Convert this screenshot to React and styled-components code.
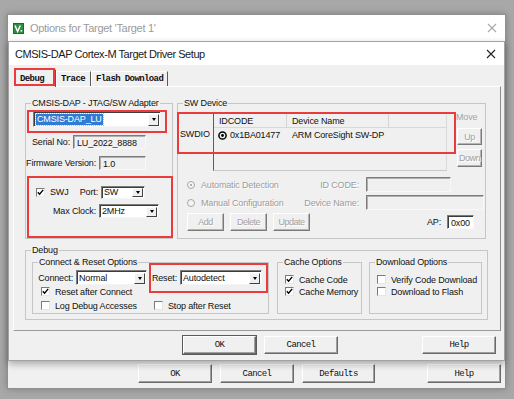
import React from 'react';
import styled, { createGlobalStyle } from 'styled-components';

const GlobalStyle = createGlobalStyle`
  html, body { margin: 0; padding: 0; background: #a8a8a8; }
  body { font-family: "Liberation Sans", Arial, sans-serif; }
  * { box-sizing: border-box; }
`;

const UI_FONT = `font-family: "Liberation Sans", Arial, sans-serif; font-size: 9px; letter-spacing: -0.15px; color: #101010;`;
const MONO_FONT = `font-family: "Liberation Mono", "Courier New", monospace; font-size: 9px; letter-spacing: -0.6px; color: #111;`;

const Desktop = styled.div`
  position: relative;
  width: 514px;
  height: 399px;
  background: #a8a8a8;
  padding: 14px 0 0 7px;
  overflow: hidden;
`;

const OuterWindow = styled.div`
  width: 499px;
  height: 375px;
  border: 1px solid #8f8f8f;
  background: #f0f0f0;
  display: flex;
  flex-direction: column;
  box-shadow: 0 0 7px rgba(0, 0, 0, 0.25);
`;

const TitleBar = styled.div`
  flex: none;
  height: ${p => p.$h}px;
  background: #fff;
  display: flex;
  align-items: center;
  padding: 0 8px 0 ${p => p.$pad}px;
  gap: 6px;
`;

const TitleText = styled.span`
  flex: 1;
  font-family: "Liberation Sans", Arial, sans-serif;
  font-size: 11px;
  letter-spacing: ${p => (p.$inactive ? '-0.3px' : '-0.45px')};
  color: ${p => (p.$inactive ? '#9b9b9b' : '#1a1a1a')};
  white-space: nowrap;
`;

const CloseIcon = ({ color }) => (
  <svg width="10" height="10" viewBox="0 0 10 10">
    <path d="M1 1 L9 9 M9 1 L1 9" stroke={color} strokeWidth="1.1" fill="none" />
  </svg>
);

const AppIcon = () => (
  <svg width="11" height="11" viewBox="0 0 11 11">
    <rect x="0" y="0" width="11" height="11" fill="#2f8f3f" />
    <rect x="0.5" y="0.5" width="10" height="10" fill="none" stroke="#1d6b2a" />
    <path d="M2 2.5 L4.6 8.5 L7.3 2.5" stroke="#fff" strokeWidth="1.5" fill="none" />
    <rect x="7.6" y="7" width="1.6" height="1.6" fill="#fff" />
  </svg>
);

const InnerDialog = styled.div`
  flex: none;
  height: 320px;
  background: #f0f0f0;
  border: 1px solid #a3a3a3;
  display: flex;
  flex-direction: column;
  box-shadow: 0 3px 7px rgba(0, 0, 0, 0.3);
  position: relative;
  z-index: 1;
`;

const InnerBody = styled.div`
  flex: 1;
  display: flex;
  flex-direction: column;
  padding: 3px 4px 0 4px;
`;

const TabStrip = styled.div`
  display: flex;
  align-items: flex-end;
  height: 18px;
  padding-left: 1px;
`;

const Tab = styled.div`
  ${MONO_FONT};
  font-weight: bold;
  width: ${p => p.$w}px;
  height: ${p => (p.$active ? 18 : 15)}px;
  display: flex;
  align-items: center;
  padding-left: ${p => (p.$active ? 5 : 4)}px;
  border-left: 1px solid #fff;
  border-top: 1px solid #fff;
  border-right: 1px solid #5a5a5a;
  background: #f0f0f0;
  margin-bottom: ${p => (p.$active ? -1 : 0)}px;
  position: relative;
  z-index: ${p => (p.$active ? 1 : 0)};
`;

const TabPanel = styled.div`
  width: 488px;
  height: 245px;
  border: 1px solid;
  border-color: #fff #8a8a8a #9a9a9a #fff;
  padding: 11px 0 0 11px;
  display: flex;
  flex-direction: column;
`;

const TopRow = styled.div`
  display: flex;
  gap: 4px;
`;

const Group = styled.fieldset`
  margin: ${p => p.$mt || 0}px 0 0 ${p => p.$ml || 0}px;
  padding: 0;
  min-width: 0;
  width: ${p => p.$w}px;
  height: ${p => p.$h}px;
  border: 1px solid #c6c6c6;
  display: flex;
  flex-direction: column;
  flex: none;
`;

const Legend = styled.legend`
  ${UI_FONT};
  line-height: 11px;
  padding: 0 1px;
  margin-left: 5px;
`;

const Row = styled.div`
  display: flex;
  align-items: center;
  height: ${p => p.$h}px;
  margin-top: ${p => p.$mt || 0}px;
  margin-left: ${p => p.$ml || 0}px;
  flex: none;
`;

const Label = styled.span`
  ${UI_FONT};
  width: ${p => (p.$w ? `${p.$w}px` : 'auto')};
  text-align: ${p => (p.$right ? 'right' : 'left')};
  padding-right: ${p => (p.$right ? 3 : 0)}px;
  margin-left: ${p => p.$ml || 0}px;
  white-space: nowrap;
  flex: none;
  ${p => p.$disabled && 'color: #9c9c9c; text-shadow: 1px 1px 0 #fff;'}
`;

const Combo = styled.div`
  ${UI_FONT};
  width: ${p => p.$w}px;
  height: ${p => p.$h}px;
  background: #fff;
  border: 1px solid;
  border-color: #7c7c7c #f4f4f4 #f4f4f4 #7c7c7c;
  box-shadow: inset 1px 1px 0 #3c3c3c;
  display: flex;
  align-items: center;
  padding: 1px 1px 0 2px;
  margin-left: ${p => p.$ml || 0}px;
  flex: none;
`;

const ComboValue = styled.span`
  flex: 1;
  white-space: nowrap;
  overflow: hidden;
  line-height: 11px;
  ${p =>
    p.$selected &&
    `color: #fff; background: #2f7bd6; flex: none; padding: 0 1px; outline: 1px dotted #9cc3f0;`}
`;

const ComboButton = styled.span`
  width: 11px;
  height: calc(100% - 1px);
  margin-left: auto;
  background: #f0f0f0;
  border: 1px solid;
  border-color: #fff #404040 #404040 #fff;
  display: flex;
  align-items: center;
  justify-content: center;
  flex: none;
  &::after {
    content: '';
    border-left: 2.5px solid transparent;
    border-right: 2.5px solid transparent;
    border-top: 3px solid #000;
  }
`;

const TextBox = styled.div`
  ${UI_FONT};
  width: ${p => p.$w}px;
  height: ${p => p.$h}px;
  background: ${p => (p.$white ? '#fff' : '#f0f0f0')};
  border: 1px solid;
  border-color: #7c7c7c #f8f8f8 #f8f8f8 #7c7c7c;
  box-shadow: inset 1px 1px 0 ${p => (p.$white ? '#3c3c3c' : '#b0b0b0')};
  display: flex;
  align-items: center;
  padding: 1px 0 0 3px;
  margin-left: ${p => p.$ml || 0}px;
  white-space: nowrap;
  flex: none;
`;

const CheckBox = styled.span`
  width: 9px;
  height: 9px;
  background: #fff;
  border: 1px solid;
  border-color: #7a7a7a #e6e6e6 #e6e6e6 #7a7a7a;
  margin-left: ${p => p.$ml || 0}px;
  margin-right: 5px;
  flex: none;
  display: flex;
  align-items: center;
  justify-content: center;
`;

const Check = ({ on, ml }) => (
  <CheckBox $ml={ml}>
    {on && (
      <svg width="7" height="7" viewBox="0 0 7 7">
        <path d="M0.8 3.2 L2.6 5.2 L6.2 0.9" stroke="#000" strokeWidth="1.4" fill="none" />
      </svg>
    )}
  </CheckBox>
);

const RadioMark = styled.span`
  width: 8px;
  height: 8px;
  border-radius: 50%;
  background: #f4f4f4;
  border: 1px solid #a8a8a8;
  margin-left: ${p => p.$ml || 0}px;
  margin-right: 6px;
  flex: none;
  display: flex;
  align-items: center;
  justify-content: center;
  &::after {
    content: '';
    width: 2px;
    height: 2px;
    border-radius: 50%;
    background: ${p => (p.$on ? '#9a9a9a' : 'transparent')};
  }
`;

const Btn = styled.div`
  ${MONO_FONT};
  width: ${p => p.$w}px;
  height: ${p => p.$h}px;
  margin-left: ${p => p.$ml || 0}px;
  background: #f0f0f0;
  border: 1px solid;
  border-color: #fff #6a6a6a #6a6a6a #fff;
  box-shadow: inset -1px -1px 0 #a0a0a0${p => (p.$default ? ', 0 0 0 1px #5a5a5a' : '')};
  display: flex;
  align-items: center;
  justify-content: center;
  flex: none;
`;

const SmallBtn = styled.div`
  ${UI_FONT};
  color: #a2a2a2;
  text-shadow: 1px 1px 0 #fff;
  width: ${p => p.$w}px;
  height: ${p => p.$h}px;
  margin-left: ${p => p.$ml || 0}px;
  margin-top: ${p => p.$mt || 0}px;
  background: #f0f0f0;
  border: 1px solid;
  border-color: #fff #7a7a7a #7a7a7a #fff;
  box-shadow: inset -1px -1px 0 #b4b4b4;
  display: flex;
  align-items: center;
  justify-content: center;
  letter-spacing: -0.5px;
  white-space: nowrap;
  flex: none;
`;

const ButtonBar = styled.div`
  display: flex;
  align-items: center;
  gap: 8px;
  margin-top: ${p => p.$mt}px;
  padding: 0 ${p => p.$pr}px 0 ${p => p.$pl}px;
  & > :last-child { margin-left: auto; }
`;

/* SW device list */
const DeviceTop = styled.div`
  display: flex;
  margin-top: 4px;
  height: 58px;
`;

const PortLabel = styled.div`
  ${UI_FONT};
  width: 35px;
  padding: 16px 0 0 2px;
`;

const ListView = styled.div`
  width: 234px;
  height: 58px;
  border-left: 1px solid #5e5e5e;
  border-top: 1px solid #d6d6d6;
  border-bottom: 1px solid #c8c8c8;
  border-right: 1px solid #dadada;
  display: flex;
  flex-direction: column;
`;

const ListRow = styled.div`
  display: grid;
  grid-template-columns: 73px 102px 1fr;
  height: 14px;
  ${p => p.$header && 'border-bottom: 1px solid #d8d8d8;'}
`;

const ListCell = styled.div`
  ${UI_FONT};
  display: flex;
  align-items: center;
  gap: 3px;
  padding-left: ${p => p.$pl || 5}px;
  white-space: nowrap;
  ${p => p.$sep && 'border-right: 1px solid #d4d4d4;'}
`;

const MoveColumn = styled.div`
  width: 25px;
  margin-left: 10px;
  display: flex;
  flex-direction: column;
`;

const MoveLabel = styled.span`
  ${UI_FONT};
  color: #a6a6a6;
  line-height: 9px;
  margin-left: -1px;
`;

const ConfigGrid = styled.div`
  display: grid;
  grid-template-columns: 122px 58px 1fr;
  grid-auto-rows: 15px;
  row-gap: 3px;
  column-gap: 4px;
  margin-top: 6px;
  align-items: center;
`;

const RadioCell = styled.div`
  display: flex;
  align-items: center;
`;

const DebugRow = styled.div`
  display: flex;
  margin-left: 6px;
`;

const Highlight = styled.div`
  position: absolute;
  left: ${p => p.$x}px;
  top: ${p => p.$y}px;
  width: ${p => p.$w}px;
  height: ${p => p.$h}px;
  border: 2px solid #ea3b3f;
  pointer-events: none;
  z-index: 5;
`;

const DeviceIcon = () => (
  <svg width="9" height="9" viewBox="0 0 9 9">
    <circle cx="4.5" cy="4.5" r="3.6" fill="none" stroke="#000" strokeWidth="1.5" />
    <circle cx="4.5" cy="4.5" r="1.4" fill="#000" />
  </svg>
);

export default function App() {
  return (
    <>
      <GlobalStyle />
      <Desktop>
        <OuterWindow>
          <TitleBar $h={26} $pad={5}>
            <AppIcon />
            <TitleText $inactive>Options for Target 'Target 1'</TitleText>
            <CloseIcon color="#a9a9a9" />
          </TitleBar>

          <InnerDialog>
            <TitleBar $h={23} $pad={6}>
              <TitleText>CMSIS-DAP Cortex-M Target Driver Setup</TitleText>
              <CloseIcon color="#222" />
            </TitleBar>

            <InnerBody>
              <TabStrip>
                <Tab $w={42} $active>Debug</Tab>
                <Tab $w={35}>Trace</Tab>
                <Tab $w={77}>Flash Download</Tab>
              </TabStrip>

              <TabPanel>
                <TopRow>
                  <Group $w={148} $h={141}>
                    <Legend>CMSIS-DAP - JTAG/SW Adapter</Legend>
                    <Row $h={16} $mt={2} $ml={7}>
                      <Combo $w={128} $h={16}>
                        <ComboValue $selected>CMSIS-DAP_LU</ComboValue>
                        <ComboButton />
                      </Combo>
                    </Row>
                    <Row $h={14} $mt={8}>
                      <Label $w={47} $right>Serial No:</Label>
                      <TextBox $w={73} $h={14}>LU_2022_8888</TextBox>
                    </Row>
                    <Row $h={14} $mt={7}>
                      <Label $w={73} $right>Firmware Version:</Label>
                      <TextBox $w={47} $h={14}>1.0</TextBox>
                    </Row>
                    <Row $h={12} $mt={16} $ml={10}>
                      <Check on />
                      <Label $w={28}>SWJ</Label>
                      <Label $w={23} $right>Port:</Label>
                      <Combo $w={44} $h={13}>
                        <ComboValue>SW</ComboValue>
                        <ComboButton />
                      </Combo>
                    </Row>
                    <Row $h={14} $mt={6}>
                      <Label $w={73} $right>Max Clock:</Label>
                      <Combo $w={60} $h={14}>
                        <ComboValue>2MHz</ComboValue>
                        <ComboButton />
                      </Combo>
                    </Row>
                  </Group>

                  <Group $w={309} $h={141}>
                    <Legend>SW Device</Legend>
                    <DeviceTop>
                      <PortLabel>SWDIO</PortLabel>
                      <ListView>
                        <ListRow $header>
                          <ListCell $sep>IDCODE</ListCell>
                          <ListCell $sep>Device Name</ListCell>
                          <ListCell />
                        </ListRow>
                        <ListRow>
                          <ListCell $pl={4}>
                            <DeviceIcon />
                            0x1BA01477
                          </ListCell>
                          <ListCell>ARM CoreSight SW-DP</ListCell>
                          <ListCell />
                        </ListRow>
                      </ListView>
                      <MoveColumn>
                        <MoveLabel>Move</MoveLabel>
                        <SmallBtn $w={25} $h={17} $mt={6}>Up</SmallBtn>
                        <SmallBtn $w={25} $h={18} $mt={4}>Down</SmallBtn>
                      </MoveColumn>
                    </DeviceTop>

                    <ConfigGrid>
                      <RadioCell>
                        <RadioMark $ml={9} $on />
                        <Label $disabled>Automatic Detection</Label>
                      </RadioCell>
                      <Label $right $disabled>ID CODE:</Label>
                      <TextBox $w={85} $h={15} />
                      <RadioCell>
                        <RadioMark $ml={9} />
                        <Label $disabled>Manual Configuration</Label>
                      </RadioCell>
                      <Label $right $disabled>Device Name:</Label>
                      <TextBox $w={118} $h={15} />
                    </ConfigGrid>

                    <Row $h={18} $mt={3} $ml={9}>
                      <SmallBtn $w={37} $h={18}>Add</SmallBtn>
                      <SmallBtn $w={37} $h={18} $ml={6}>Delete</SmallBtn>
                      <SmallBtn $w={37} $h={18} $ml={6}>Update</SmallBtn>
                      <Label $w={134} $right>AP:</Label>
                      <TextBox $w={27} $h={14} $white $ml={3}>0x00</TextBox>
                    </Row>
                  </Group>
                </TopRow>

                <Group $w={463} $h={75} $mt={6}>
                  <Legend>Debug</Legend>
                  <DebugRow>
                    <Group $w={237} $h={57} $mt={1}>
                      <Legend>Connect &amp; Reset Options</Legend>
                      <Row $h={15} $mt={2}>
                        <Label $w={43} $right>Connect:</Label>
                        <Combo $w={71} $h={15}>
                          <ComboValue>Normal</ComboValue>
                          <ComboButton />
                        </Combo>
                        <Label $w={33} $right>Reset:</Label>
                        <Combo $w={82} $h={15}>
                          <ComboValue>Autodetect</ComboValue>
                          <ComboButton />
                        </Combo>
                      </Row>
                      <Row $h={11} $mt={1} $ml={8}>
                        <Check on />
                        <Label>Reset after Connect</Label>
                      </Row>
                      <Row $h={11} $mt={3} $ml={8}>
                        <Check />
                        <Label $w={99}>Log Debug Accesses</Label>
                        <Check />
                        <Label>Stop after Reset</Label>
                      </Row>
                    </Group>

                    <Group $w={85} $h={57} $mt={1} $ml={8}>
                      <Legend>Cache Options</Legend>
                      <Row $h={11} $mt={6} $ml={7}>
                        <Check on />
                        <Label>Cache Code</Label>
                      </Row>
                      <Row $h={11} $mt={1} $ml={7}>
                        <Check on />
                        <Label>Cache Memory</Label>
                      </Row>
                    </Group>

                    <Group $w={113} $h={57} $mt={1} $ml={7}>
                      <Legend>Download Options</Legend>
                      <Row $h={11} $mt={6} $ml={7}>
                        <Check />
                        <Label>Verify Code Download</Label>
                      </Row>
                      <Row $h={11} $mt={1} $ml={7}>
                        <Check />
                        <Label>Download to Flash</Label>
                      </Row>
                    </Group>
                  </DebugRow>
                </Group>
              </TabPanel>

              <ButtonBar $mt={5} $pl={170} $pr={4}>
                <Btn $w={73} $h={18} $default>OK</Btn>
                <Btn $w={74} $h={18}>Cancel</Btn>
                <Btn $w={74} $h={18}>Help</Btn>
              </ButtonBar>
            </InnerBody>
          </InnerDialog>

          <ButtonBar $mt={3} $pl={130} $pr={4}>
            <Btn $w={74} $h={19}>OK</Btn>
            <Btn $w={74} $h={19}>Cancel</Btn>
            <Btn $w={73} $h={19}>Defaults</Btn>
            <Btn $w={74} $h={19}>Help</Btn>
          </ButtonBar>
        </OuterWindow>

        <Highlight $x={14} $y={68} $w={41} $h={18} />
        <Highlight $x={27} $y={110} $w={140} $h={23} />
        <Highlight $x={27} $y={176} $w={146} $h={62} />
        <Highlight $x={177} $y={112} $w={279} $h={42} />
        <Highlight $x={149} $y={263} $w={119} $h={30} />
      </Desktop>
    </>
  );
}
